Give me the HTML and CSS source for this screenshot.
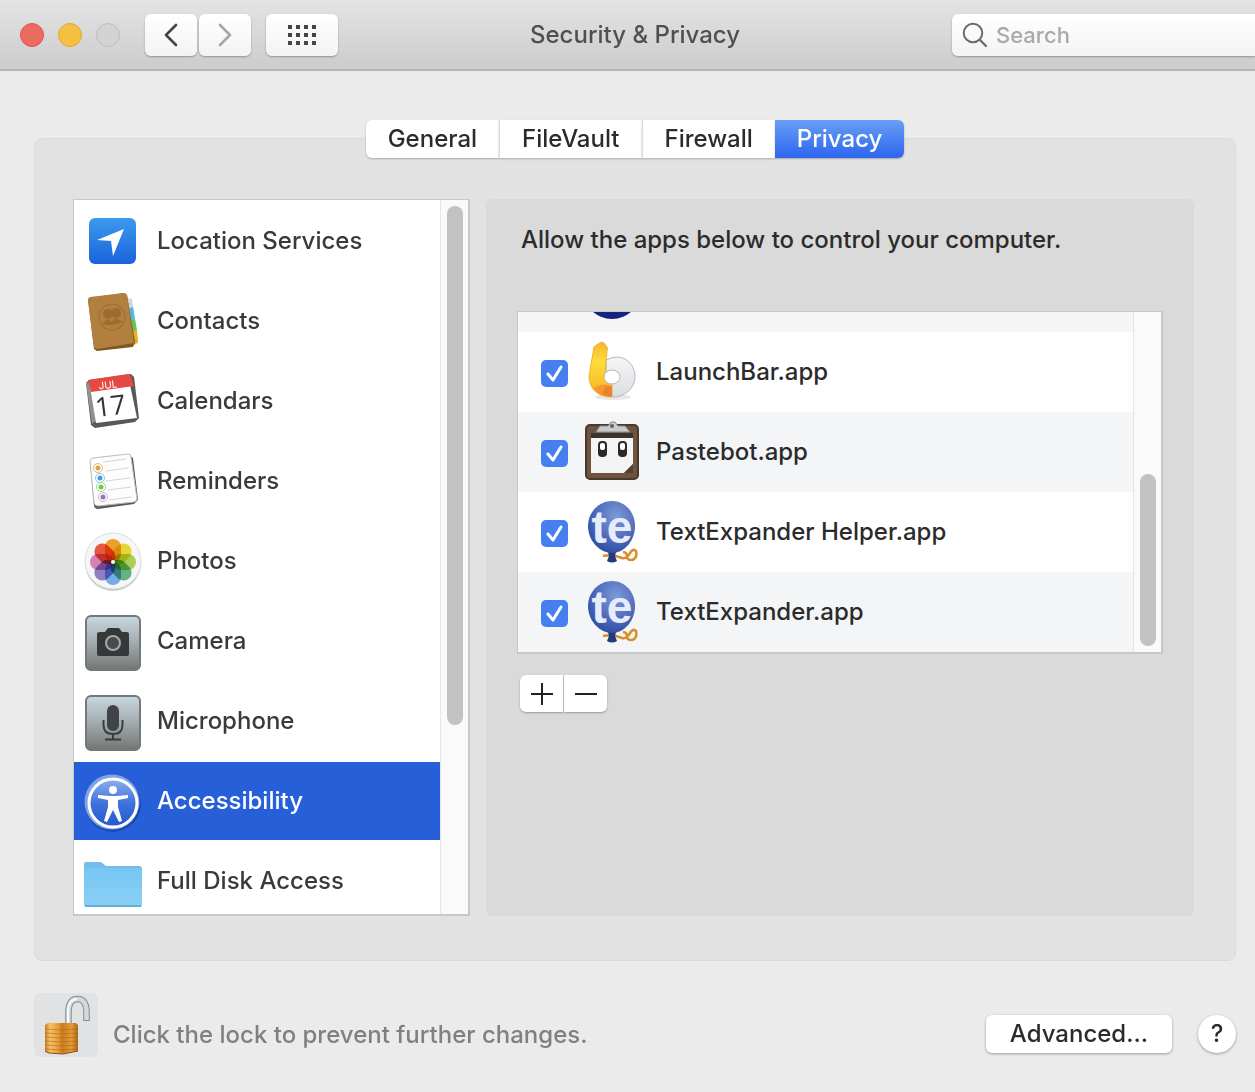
FILE: index.html
```html
<!DOCTYPE html>
<html lang="en">
<head>
<meta charset="utf-8">
<meta name="viewport" content="width=device-width, initial-scale=1">
<title>Security &amp; Privacy</title>
<link rel="stylesheet" href="styles.css">
</head>
<body>
<svg class="defs" aria-hidden="true">
  <defs>
    <linearGradient id="blue" x1="0" y1="0" x2="0" y2="1"><stop offset="0" stop-color="#3a9bec"/><stop offset="1" stop-color="#1b62dc"/></linearGradient>
    <linearGradient id="metal" x1="0" y1="0" x2="0" y2="1"><stop offset="0" stop-color="#c6d8df"/><stop offset=".5" stop-color="#a3abae"/><stop offset="1" stop-color="#747574"/></linearGradient>
    <linearGradient id="folder" x1="0" y1="0" x2="0" y2="1"><stop offset="0" stop-color="#76c6f5"/><stop offset="1" stop-color="#8bd0f4"/></linearGradient>
    <linearGradient id="disc" x1="0" y1="0" x2="0" y2="1"><stop offset="0" stop-color="#8db0ee"/><stop offset=".5" stop-color="#3f72dc"/><stop offset="1" stop-color="#2358d0"/></linearGradient>
    <linearGradient id="gold" x1="0" y1="0" x2="0" y2="1"><stop offset="0" stop-color="#f5b32c"/><stop offset=".35" stop-color="#ffdc3c"/><stop offset=".75" stop-color="#fbc22d"/><stop offset="1" stop-color="#f08a25"/></linearGradient>
    <linearGradient id="silver" x1="0" y1="0" x2="0" y2="1"><stop offset="0" stop-color="#f6f6f8"/><stop offset="1" stop-color="#dcdde1"/></linearGradient>
    <linearGradient id="brass" x1="0" y1="0" x2="1" y2="0"><stop offset="0" stop-color="#c97f1f"/><stop offset=".15" stop-color="#f6c263"/><stop offset=".4" stop-color="#e79d38"/><stop offset=".52" stop-color="#c87c20"/><stop offset=".8" stop-color="#e69a35"/><stop offset="1" stop-color="#a8681a"/></linearGradient>
    <radialGradient id="balloon" cx=".6" cy=".3" r=".75"><stop offset="0" stop-color="#7f99d6"/><stop offset=".5" stop-color="#5573c0"/><stop offset="1" stop-color="#2c4aa0"/></radialGradient>
    <symbol id="te" viewBox="0 0 60 64">
      <path d="M21 56q10-2 19 2 5 1 8-5 3-5 6-2 2 7-4 9-5 0-5-3 0-5-4-5" fill="none" stroke="#d98d2b" stroke-width="2.5"/>
      <path d="M26 52h8l-1 4 2 5q-5 3-10 0l2-5z" fill="#203a80"/>
      <path d="M30 1C43 1 53 12 53 26c0 15-11 27-23 27S6 41 6 26C6 12 17 1 30 1z" fill="url(#balloon)"/>
      <text x="30" y="43" text-anchor="middle" class="te-text">te</text>
    </symbol>
  </defs>
</svg>

<header class="toolbar">
  <div class="lights">
    <button class="light close" aria-label="Close"></button>
    <button class="light minimize" aria-label="Minimize"></button>
    <button class="light zoom" aria-label="Zoom" disabled></button>
  </div>
  <nav class="nav" aria-label="History">
    <button class="tool" aria-label="Back"><svg width="16" height="26" viewBox="0 0 16 26"><path d="M13 3 3 13l10 10" fill="none" stroke="#444" stroke-width="2.6" stroke-linecap="round" stroke-linejoin="round"/></svg></button>
    <button class="tool" aria-label="Forward"><svg width="16" height="26" viewBox="0 0 16 26"><path d="m3 3 10 10L3 23" fill="none" stroke="#a6a6a6" stroke-width="2.6" stroke-linecap="round" stroke-linejoin="round"/></svg></button>
  </nav>
  <button class="tool all" aria-label="Show all"><svg width="28" height="20" viewBox="0 0 28 20"><path d="M0 2h28M0 10h28M0 18h28" stroke="#444" stroke-width="4" stroke-dasharray="4 4"/></svg></button>
  <h1 class="title">Security &amp; Privacy</h1>
  <label class="search">
    <svg width="26" height="26" viewBox="0 0 26 26"><circle cx="11" cy="11" r="9.3" fill="none" stroke="#6c6c6c" stroke-width="2"/><path d="m18 18 6 6" stroke="#6c6c6c" stroke-width="2.4" stroke-linecap="round"/></svg>
    <input type="search" placeholder="Search" aria-label="Search">
  </label>
</header>

<main class="content">
  <nav class="tabs" aria-label="Panes">
    <button class="tab">General</button>
    <button class="tab">FileVault</button>
    <button class="tab">Firewall</button>
    <button class="tab active">Privacy</button>
  </nav>

  <section class="panel">
    <div class="box sidebar">
      <ul class="list">
        <li><a class="item" href="#location"><svg class="icon" viewBox="0 0 60 60"><rect x="6" y="6" width="47" height="46" rx="6" fill="url(#blue)"/><path d="M41 17 30 44l-2-15-14-1z" fill="#fff"/></svg>Location Services</a></li>
        <li><a class="item" href="#contacts"><svg class="icon" viewBox="0 0 60 60"><path d="m44 6 5 1 6 44-6 3z" fill="#d5d7d6"/><path d="m46 16 4-1 2 12-4 1z" fill="#51b9e8"/><path d="m48 28 4-1 2 11-4 2z" fill="#62c751"/><path d="m50 40 4-2 1 12-4 3z" fill="#e5b21f"/><path d="m5 8 1-2L41 1l3 2 8 47-2 5-36 4-3-2z" fill="#805722"/><path d="M5 8q0-2 2-3l34-4q2 0 3 2l7 48-37 6q-2 0-3-2z" fill="#b1803f"/><circle cx="29" cy="25" r="13" fill="none" stroke="#a37335" stroke-width="1.5"/><g fill="#9b6c2d"><circle cx="25" cy="22" r="5"/><circle cx="33" cy="21" r="5"/><path d="m19 32 5-5 5 3 4-4 7 4q-11 5-21 2z"/></g></svg>Contacts</a></li>
        <li><a class="item" href="#calendars"><svg class="icon" viewBox="0 0 60 60"><path d="m3 11 3-3 42-6 3 3 5 41-4 4-40 6-4-3z" fill="#555a59"/><path d="m3 11 3-1 7 39-4 3z" fill="#8d9292"/><path d="m6 9 39-6 9 43-41 5z" fill="#fff"/><path d="m5 8 40-6q2 0 3 2l3 10-43 6z" fill="#e44a43"/><g transform="rotate(-7 30 30)"><text x="27" y="16" text-anchor="middle" class="cal-month">JUL</text><text x="27" y="43" text-anchor="middle" class="cal-day">17</text></g></svg>Calendars</a></li>
        <li><a class="item" href="#reminders"><svg class="icon" viewBox="0 0 60 60"><path d="m7 10 3-3 36-4 4 3 5 42-4 4-36 5q-3 0-4-3z" fill="#5a5a5c"/><path d="M7 9q0-2 3-3l35-4q3 0 3 3l6 42q0 2-3 3l-36 4q-3 0-4-3z" fill="#fdfdfe" stroke="#bcbcbf"/><path d="m20 10 23-3M23 19l22-3M23 29l24-3M25 38l23-3M26 48l23-3" stroke="#d5d5d8"/><g fill="#fff" stroke-width="1"><circle cx="15" cy="16" r="4.500" stroke="#eab672"/><circle cx="17" cy="26" r="4.500" stroke="#8bc8ee"/><circle cx="18" cy="35" r="4.500" stroke="#a0da8d"/><circle cx="20" cy="45" r="4.500" stroke="#c7afd4"/></g><circle cx="15" cy="16" r="2.500" fill="#e5a043"/><circle cx="17" cy="26" r="2.500" fill="#3f9fe0"/><circle cx="18" cy="35" r="2.500" fill="#6fcc52"/><circle cx="20" cy="45" r="2.500" fill="#9a72b1"/></svg>Reminders</a></li>
        <li><a class="item" href="#photos"><svg class="icon" viewBox="0 0 60 60"><circle cx="30" cy="31" r="28" fill="#c6c8c8"/><circle cx="30" cy="29" r="28" fill="#f6f6f6" stroke="#dcdcdc"/><g class="petals"><rect x="22" y="7" width="16" height="23" rx="8" fill="#f5a52c"/><rect x="22" y="7" width="16" height="23" rx="8" fill="#ecdf37" transform="rotate(45 30 30)"/><rect x="22" y="7" width="16" height="23" rx="8" fill="#b6d65c" transform="rotate(90 30 30)"/><rect x="22" y="7" width="16" height="23" rx="8" fill="#69b98c" transform="rotate(135 30 30)"/><rect x="22" y="7" width="16" height="23" rx="8" fill="#79b2ec" transform="rotate(180 30 30)"/><rect x="22" y="7" width="16" height="23" rx="8" fill="#9483cb" transform="rotate(225 30 30)"/><rect x="22" y="7" width="16" height="23" rx="8" fill="#d889b9" transform="rotate(270 30 30)"/><rect x="22" y="7" width="16" height="23" rx="8" fill="#ee5a43" transform="rotate(315 30 30)"/></g><circle cx="30" cy="30" r="2" fill="#fff"/></svg>Photos</a></li>
        <li><a class="item" href="#camera"><svg class="icon" viewBox="0 0 60 60"><rect x="3" y="4" width="54" height="54" rx="5" fill="url(#metal)" stroke="#73787a" stroke-width="2"/><path d="M17 20h5l3-4h11l3 4h5q2 0 2 2v20q0 2-2 2H16q-2 0-2-2V22q0-2 3-2z" fill="#353839"/><circle cx="30" cy="31" r="7" fill="#484b4d" stroke="#a6a9aa" stroke-width="2"/></svg>Camera</a></li>
        <li><a class="item" href="#microphone"><svg class="icon" viewBox="0 0 60 60"><rect x="3" y="4" width="54" height="54" rx="5" fill="url(#metal)" stroke="#73787a" stroke-width="2"/><rect x="24" y="13" width="12" height="26" rx="6" fill="#404346"/><path d="M20.500 28v5q0 9 9.500 9t9.500-9v-5M30 42v5M22 47.500h16" fill="none" stroke="#393c3e" stroke-width="2"/></svg>Microphone</a></li>
        <li><a class="item selected" href="#accessibility" aria-current="page"><svg class="icon" viewBox="0 0 60 60"><circle cx="30" cy="32" r="28" fill="#1d48b2"/><circle cx="29" cy="30" r="27.500" fill="#80a2e7"/><circle cx="30" cy="31" r="24" fill="url(#disc)" stroke="#fff" stroke-width="3"/><circle cx="30" cy="18" r="4" fill="#fff"/><path d="m15 23 12 1h6l12-1v3l-10 2v7l4 14-3 1-6-12-6 12-3-1 4-14v-7l-10-2z" fill="#fff"/></svg>Accessibility</a></li>
        <li><a class="item" href="#disk"><svg class="icon" viewBox="0 0 60 60"><path d="M1 16V12q0-2 2-2h15l5 4h33q3 0 3 3v35H1z" fill="#74bde8"/><path d="M1 18q0-2 2-2h54q2 0 2 2v35q0 2-2 2H3q-2 0-2-2z" fill="url(#folder)"/><path d="M2 54h56" stroke="#60afd9" stroke-width="2"/></svg>Full Disk Access</a></li>
      </ul>
      <div class="track"><div class="thumb"></div></div>
    </div>

    <div class="detail">
      <h2 class="prompt">Allow the apps below to control your computer.</h2>
      <div class="box apps">
        <ul class="app-list">
          <li class="app clipped"><svg class="icon" viewBox="0 0 60 60"><circle cx="30" cy="28" r="29" fill="#14237f"/></svg></li>
          <li><label class="app"><input type="checkbox" checked><svg class="icon" viewBox="0 0 60 60"><ellipse cx="31" cy="55" rx="18" ry="3" fill="#e7e7e7"/><path d="M24 18q6-3 12-3c10 1 17 9 17 20 0 10-9 20-22 20l-6-10z" fill="url(#silver)" stroke="#b8b9bd"/><path d="M12 5q0-1 6-4 2-2 4 0l3 4q1 1 0 4l-2 23q0 8 7 10v13C15 55 7 46 7 34z" fill="url(#gold)" stroke="#e9b437"/><path d="M12 46q7-5 14-3l4 1v11Q18 55 12 46z" fill="#f29a2b"/><path d="m24 44 6 1v10l-10-3z" fill="#e9822a"/><ellipse cx="30" cy="35" rx="8" ry="7" fill="#fff" stroke="#b8b9bd"/></svg>LaunchBar.app</label></li>
          <li><label class="app"><input type="checkbox" checked><svg class="icon" viewBox="0 0 60 60"><rect x="4" y="3" width="52" height="54" rx="4" fill="#70533e" stroke="#4a382c" stroke-width="2"/><path d="M9 12h42v30l-9 9H9z" fill="#f4f4f4"/><path d="M51 42v9h-9z" fill="#54402f"/><path d="M9 11h42v5H9z" fill="#3c332f"/><path d="m14 10 4-6h8l3-4h4l3 4h7l5 6z" fill="#c9caca" stroke="#8a8a89"/><circle cx="30" cy="4" r="2" fill="#665f5a"/><g fill="#292929"><rect x="16" y="19" width="9" height="16" rx="4"/><rect x="36" y="19" width="9" height="16" rx="4"/></g><g fill="#fff"><rect x="18" y="21" width="5" height="7" rx="2"/><rect x="38" y="21" width="5" height="7" rx="2"/></g></svg>Pastebot.app</label></li>
          <li><label class="app"><input type="checkbox" checked><svg class="icon tall"><use href="#te"/></svg>TextExpander Helper.app</label></li>
          <li><label class="app"><input type="checkbox" checked><svg class="icon tall"><use href="#te"/></svg>TextExpander.app</label></li>
        </ul>
        <div class="track end"><div class="thumb"></div></div>
      </div>
      <div class="stepper">
        <button aria-label="Add"><svg width="22" height="22" viewBox="0 0 22 22"><path d="M0 11h22M11 0v22" stroke="#222" stroke-width="2"/></svg></button>
        <button aria-label="Remove"><svg width="22" height="22" viewBox="0 0 22 22"><path d="M0 11h22" stroke="#222" stroke-width="2"/></svg></button>
      </div>
    </div>
  </section>

  <footer class="footer">
    <button class="lock" aria-label="Lock"><svg width="64" height="64" viewBox="0 0 64 64"><path d="M34.500 31V17q1-11 9-11t9 11v11" fill="none" stroke="#858b8f" stroke-width="6.500"/><path d="M34.500 31V17q1-11 9-11t9 11v10" fill="none" stroke="#d3d8dc" stroke-width="4.500"/><path d="M34 31V17q1-11 9-11" fill="none" stroke="#fafbfc" stroke-width="2"/><path d="m11 32 3-2h28l2 2v26l-15 3-16-1-2-2z" fill="url(#brass)"/><path d="m11 36 17 1 16-1M11 40l17 1 16-1M11 44l17 1 16-1M11 48l17 1 16-1M11 52l17 1 16-1M11 56l17 1 16-1" fill="none" stroke="#9d6119" stroke-opacity=".5"/><path d="m11 58 4 2 14 1 15-3" fill="none" stroke="#855214" stroke-width="1"/></svg></button>
    <p class="hint">Click the lock to prevent further changes.</p>
    <button class="push">Advanced...</button>
    <button class="help" aria-label="Help">?</button>
  </footer>
</main>
</body>
</html>
```
FILE: styles.css
```css
* { box-sizing: border-box; }

body {
  margin: 0;
  background: #ebebeb;
  color: #2b2b2b;
  font: 500 24px/32px Inter, "Liberation Sans", sans-serif;
}

button, input { font: inherit; color: inherit; }
button { border: 0; padding: 0; background: #fff; display: flex; align-items: center; justify-content: center; }
h1, h2, p, ul { margin: 0; padding: 0; font-size: inherit; font-weight: inherit; list-style: none; }
.defs { position: absolute; width: 0; height: 0; }

/* Title bar */
.toolbar {
  display: flex;
  align-items: center;
  height: 71px;
  padding-left: 20px;
  background: linear-gradient(#e4e4e4, #cccccc);
  border-bottom: 2px solid #b4b4b4;
  overflow: hidden;
}
.lights { display: flex; gap: 14px; margin-right: 25px; }
.light { width: 24px; height: 24px; border-radius: 50%; border: 1px solid transparent; }
.close { background: #ed6a5f; border-color: #d9584e; }
.minimize { background: #f5bf42; border-color: #dfa935; }
.zoom { background: #d3d3d3; border-color: #bebebe; }
.nav { display: flex; gap: 2px; margin-right: 15px; }
.tool {
  width: 52px;
  height: 42px;
  border-radius: 6px;
  background: linear-gradient(#fff, #f3f3f3);
  box-shadow: 0 1px 2px rgba(0, 0, 0, .3);
}
.all { width: 72px; }
.title { flex: 1; padding-right: 20px; text-align: center; color: #505050; }
.search {
  display: flex;
  align-items: center;
  gap: 8px;
  width: 303px;
  height: 42px;
  padding-left: 10px;
  border-radius: 6px 0 0 6px;
  background: linear-gradient(#fff, #f3f3f3);
  box-shadow: 0 1px 2px rgba(0, 0, 0, .3);
}
.search input { flex: 1; min-width: 0; border: 0; padding: 0; background: none; outline: 0; font-size: 22px; }
.search input::placeholder { color: #a9a9a9; opacity: 1; }

/* Tabs */
.content { padding: 49px 19px 36px 34px; }
.tabs { position: relative; display: flex; justify-content: center; margin-bottom: -20px; }
.tab {
  height: 38px;
  padding: 0 22px;
  border-left: 1px solid #dcdcdc;
  box-shadow: 0 1px 2px rgba(0, 0, 0, .25);
}
.tab:first-child { border-left: 0; border-radius: 6px 0 0 6px; }
.tab:last-child { border-radius: 0 6px 6px 0; }
.tab.active { border-left: 0; color: #fff; background: linear-gradient(#6a9ef5, #2b66ee); }

.panel {
  display: flex;
  gap: 16px;
  padding: 60px 41px 44px 38px;
  background: #e2e2e2;
  border: 1px solid #dadada;
  border-radius: 8px;
}
.box { display: flex; background: #fff; border: 2px solid #c8c8c8; border-width: 1px 2px 2px 1px; overflow: hidden; }

/* Category list */
.sidebar { width: 397px; height: 717px; flex: none; }
.list { flex: 1; display: flex; flex-direction: column; gap: 2px; padding-top: 2px; }
.item {
  display: flex;
  align-items: center;
  gap: 14px;
  height: 78px;
  padding-left: 9px;
  color: #3a3a3a;
  text-decoration: none;
}
.item .icon { margin-top: 2px; }
.item.selected { background: #265fd8; color: #fff; }
.icon { width: 60px; height: 60px; flex: none; overflow: visible; }
.petals rect { mix-blend-mode: multiply; }
.cal-month { font: 10px Inter, sans-serif; fill: #fff; }
.cal-day { font: 27px "Open Sans", sans-serif; fill: #333; }

.track { width: 28px; flex: none; display: flex; flex-direction: column; padding: 6px; background: #fafafa; border-left: 1px solid #e6e6e6; }
.thumb { width: 16px; height: 519px; border-radius: 8px; background: #c2c2c2; }
.track.end { justify-content: flex-end; }
.track.end .thumb { height: 172px; }

/* App permissions */
.detail { flex: 1; padding: 25px 31px; background: #dadada; border-radius: 6px; }
.prompt { padding-left: 4px; margin-bottom: 55px; }
.apps { height: 343px; }
.app-list { flex: 1; display: flex; flex-direction: column; justify-content: flex-end; }
.app-list li { background: #fff; flex: none; }
.app-list li:nth-child(odd) { background: #f3f5f6; }
.app { display: flex; align-items: center; gap: 14px; height: 80px; padding-left: 23px; }
.app-list .clipped { padding-left: 64px; }
.app input {
  appearance: none;
  width: 27px;
  height: 27px;
  margin: 2px 0 0;
  border-radius: 5px;
  background: #4680f0 url("data:image/svg+xml,%3Csvg xmlns='http://www.w3.org/2000/svg' viewBox='0 0 27 27'%3E%3Cpath d='m7 14 5 6 8-13' fill='none' stroke='white' stroke-width='3' stroke-linecap='round' stroke-linejoin='round'/%3E%3C/svg%3E");
}
.icon.tall { height: 64px; }
.te-text { font: bold 46px "Liberation Sans", sans-serif; fill: #e6ecf9; }
.stepper { display: flex; gap: 1px; margin: 21px 3px; }
.stepper button { width: 43px; height: 37px; box-shadow: 0 1px 2px rgba(0, 0, 0, .3); }
.stepper button:first-child { border-radius: 6px 0 0 6px; }
.stepper button:last-child { border-radius: 0 6px 6px 0; }

/* Footer */
.footer { display: flex; align-items: center; margin-top: 32px; }
.lock { width: 64px; height: 64px; border-radius: 6px; background: #e1e2e3; }
.hint { flex: 1; padding: 26px 0 6px 15px; color: #808080; }
.push, .help { height: 38px; margin-top: 18px; box-shadow: 0 1px 3px rgba(0, 0, 0, .35); }
.push { padding: 0 24px; border-radius: 6px; margin-right: 26px; }
.help { width: 38px; border-radius: 50%; }
```
